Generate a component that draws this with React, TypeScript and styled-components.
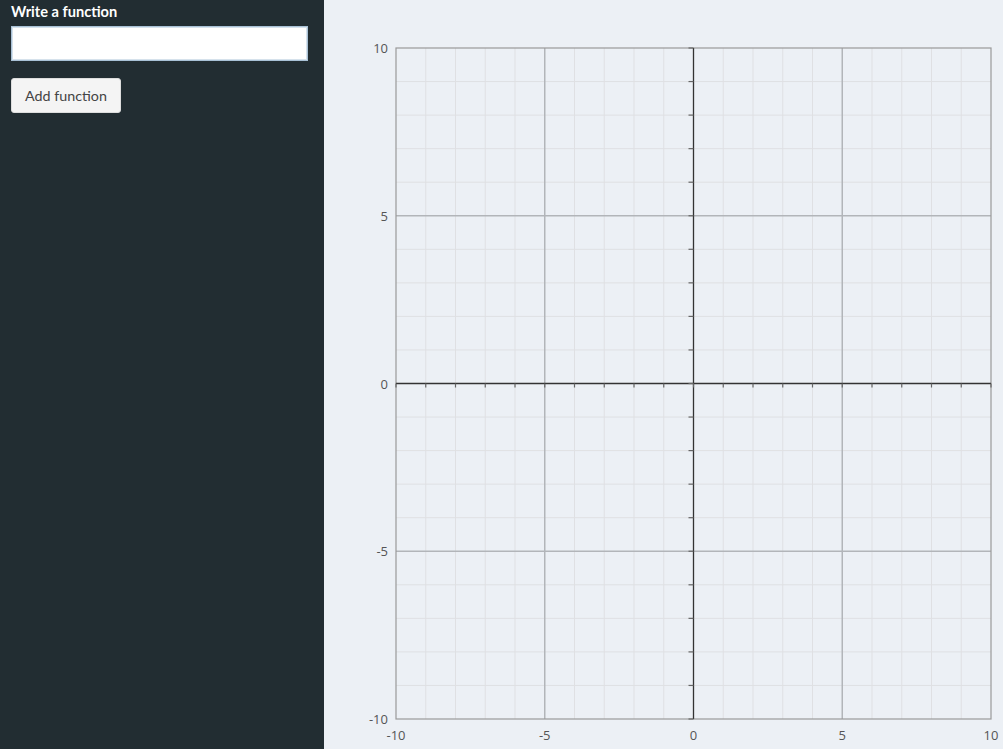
import React from "react";
import styled, { createGlobalStyle } from "styled-components";

const GlobalStyle = createGlobalStyle`
  html, body {
    margin: 0;
    padding: 0;
    background: #ecf0f5;
  }
  * { box-sizing: border-box; }
`;

const Page = styled.div`
  display: flex;
  width: 1003px;
  height: 749px;
  overflow: hidden;
`;

const Sidebar = styled.aside`
  width: 324px;
  flex-shrink: 0;
  background: #222d32;
  padding: 3px 16px 0 11px;
  display: flex;
  flex-direction: column;
  font-family: Lato, "Liberation Sans", sans-serif;
`;

const Label = styled.label`
  color: #fff;
  font-weight: 700;
  font-size: 14.6px;
  line-height: 17px;
  margin-bottom: 6px;
`;

const FunctionInput = styled.input`
  width: 297px;
  height: 35px;
  border: 1px solid #a9c1d6;
  box-shadow: inset 0 0 0 1px #d6e2ec;
  background: #fff;
  padding: 6px 12px;
  font-size: 14px;
  outline: none;
`;

const AddButton = styled.button`
  align-self: flex-start;
  margin-top: 17px;
  width: 110px;
  height: 35px;
  background: #f4f4f4;
  border: 1px solid #ddd;
  border-radius: 3px;
  color: #444;
  font-family: Lato, "Liberation Sans", sans-serif;
  font-size: 14.3px;
  cursor: pointer;
`;

const Content = styled.main`
  flex: 1;
  padding-left: 36px;
  display: flex;
  align-items: flex-start;
`;

const W = 643;
const H = 749;
const X0 = 36;
const X1 = 631;
const Y0 = 48;
const Y1 = 719;

const sx = (v: number) => X0 + ((v + 10) / 20) * (X1 - X0);
const sy = (v: number) => Y0 + ((10 - v) / 20) * (Y1 - Y0);

const range = Array.from({ length: 21 }, (_, i) => i - 10);

function Chart() {
  const minor = range.filter((v) => v % 5 !== 0);
  const major = [-5, 5];
  return (
    <svg width={W} height={H} style={{ display: "block" }}>
      {minor.map((v) => (
        <g key={"m" + v} stroke="#dfe0e3" strokeWidth={1}>
          <line x1={sx(v)} x2={sx(v)} y1={Y0} y2={Y1} />
          <line x1={X0} x2={X1} y1={sy(v)} y2={sy(v)} />
        </g>
      ))}
      {major.map((v) => (
        <g key={"M" + v} stroke="#b2b5b9" strokeWidth={1.5}>
          <line x1={sx(v)} x2={sx(v)} y1={Y0} y2={Y1} />
          <line x1={X0} x2={X1} y1={sy(v)} y2={sy(v)} />
        </g>
      ))}
      <rect x={X0} y={Y0} width={X1 - X0} height={Y1 - Y0} fill="none" stroke="#999" strokeWidth={1.2} />
      <line x1={X0} x2={X1} y1={sy(0)} y2={sy(0)} stroke="#333" strokeWidth={1.3} />
      <line x1={sx(0)} x2={sx(0)} y1={Y0} y2={Y1} stroke="#333" strokeWidth={1.3} />
      {range.map((v) => (
        <g key={"t" + v} stroke="#666" strokeWidth={1.2}>
          <line x1={sx(v)} x2={sx(v)} y1={sy(0)} y2={sy(0) + 4} />
          <line x1={sx(0) - 5} x2={sx(0)} y1={sy(v)} y2={sy(v)} />
        </g>
      ))}
      <g fontFamily='"Open Sans", "Liberation Sans", sans-serif' fontSize={13} fill="#555">
        {[-10, -5, 0, 5, 10].map((v) => (
          <text key={"y" + v} x={X0 - 8} y={sy(v) + 5} textAnchor="end">
            {v}
          </text>
        ))}
        {[-10, -5, 0, 5, 10].map((v) => (
          <text key={"x" + v} x={sx(v)} y={Y1 + 21} textAnchor="middle">
            {v}
          </text>
        ))}
      </g>
    </svg>
  );
}

export default function App() {
  return (
    <>
      <GlobalStyle />
      <Page>
        <Sidebar>
          <Label htmlFor="fn">Write a function</Label>
          <FunctionInput id="fn" type="text" />
          <AddButton>Add function</AddButton>
        </Sidebar>
        <Content>
          <Chart />
        </Content>
      </Page>
    </>
  );
}
